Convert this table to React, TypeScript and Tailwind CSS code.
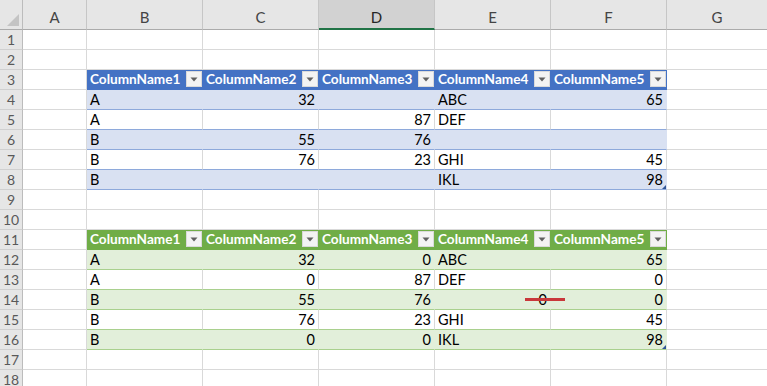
import React from "react";

type Kind =
  | "plain"
  | "bHead"
  | "bBand"
  | "bWhite"
  | "gHead"
  | "gBand"
  | "gWhite";

type CellDef = { v?: string; num?: boolean; strike?: boolean; handle?: boolean };

const cols = ["A", "B", "C", "D", "E", "F", "G"];

const kindClass: Record<Kind, string> = {
  plain: "bg-white border-r border-b border-[#d9d9d9]",
  bHead: "bg-[#4472c4] border-r border-b border-[#4472c4]",
  bBand: "bg-[#d9e1f2] border-r border-r-[#d9e1f2] border-b border-b-[#8ea9db]",
  bWhite: "bg-white border-r border-r-[#d9d9d9] border-b border-b-[#8ea9db]",
  gHead: "bg-[#70ad47] border-r border-b border-[#70ad47]",
  gBand: "bg-[#e2efda] border-r border-r-[#e2efda] border-b border-b-[#a9d08e]",
  gWhite: "bg-white border-r border-r-[#d9d9d9] border-b border-b-[#a9d08e]",
};

const blueData: CellDef[][] = [
  [{ v: "A" }, { v: "32", num: true }, {}, { v: "ABC" }, { v: "65", num: true }],
  [{ v: "A" }, {}, { v: "87", num: true }, { v: "DEF" }, {}],
  [{ v: "B" }, { v: "55", num: true }, { v: "76", num: true }, {}, {}],
  [{ v: "B" }, { v: "76", num: true }, { v: "23", num: true }, { v: "GHI" }, { v: "45", num: true }],
  [{ v: "B" }, {}, {}, { v: "IKL" }, { v: "98", num: true, handle: true }],
];

const greenData: CellDef[][] = [
  [{ v: "A" }, { v: "32", num: true }, { v: "0", num: true }, { v: "ABC" }, { v: "65", num: true }],
  [{ v: "A" }, { v: "0", num: true }, { v: "87", num: true }, { v: "DEF" }, { v: "0", num: true }],
  [{ v: "B" }, { v: "55", num: true }, { v: "76", num: true }, { v: "0", num: true, strike: true }, { v: "0", num: true }],
  [{ v: "B" }, { v: "76", num: true }, { v: "23", num: true }, { v: "GHI" }, { v: "45", num: true }],
  [{ v: "B" }, { v: "0", num: true }, { v: "0", num: true }, { v: "IKL" }, { v: "98", num: true, handle: true }],
];

function Dropdown() {
  return (
    <span className="flex h-4 w-4 shrink-0 items-center justify-center border border-[#dadada] bg-[#f3f3f3] mt-[1px]">
      <svg width="8" height="5" viewBox="0 0 8 5">
        <polygon points="0.5,0.5 7.5,0.5 4,4.5" fill="#606060" />
      </svg>
    </span>
  );
}

function DataCell({ kind, cell, last }: { kind: Kind; cell: CellDef; last?: boolean }) {
  const extra = last ? " border-r-[#d9d9d9]" : "";
  return (
    <div
      className={
        "relative flex h-5 items-end overflow-visible px-[3px] pb-[1px] text-[14.5px] leading-[17px] text-black " +
        kindClass[kind] +
        extra +
        (cell.num ? " justify-end" : " justify-start")
      }
    >
      {cell.v ? <span>{cell.v}</span> : null}
      {cell.strike ? (
        <span className="pointer-events-none absolute left-[90px] top-[8px] z-10 h-[3px] w-[40px] bg-[#c9383b]" />
      ) : null}
      {cell.handle ? (
        <svg className="absolute bottom-0 right-0" width="4" height="4" viewBox="0 0 4 4">
          <polygon points="4,0 4,4 0,4" fill="#2f5597" />
        </svg>
      ) : null}
    </div>
  );
}

function HeadCell({ kind, label }: { kind: Kind; label: string }) {
  return (
    <div
      className={
        "flex h-5 items-start justify-between pl-[3px] text-[13.6px] font-bold leading-[19px] text-white " +
        kindClass[kind]
      }
    >
      <span className="whitespace-nowrap">{label}</span>
      <Dropdown />
    </div>
  );
}

export default function App() {
  const rows: React.ReactNode[] = [];

  for (let r = 1; r <= 18; r++) {
    const cells: React.ReactNode[] = [];
    cells.push(
      <div
        key={"rh" + r}
        className="flex h-5 items-center justify-center border-r border-b border-r-[#bcbcbc] border-b-[#d0d0d0] bg-[#e6e6e6] text-[14px] leading-none text-[#595959]"
      >
        {r}
      </div>
    );
    cells.push(<div key={"a" + r} className={"h-5 " + kindClass.plain} />);

    const isBlueHead = r === 3;
    const isGreenHead = r === 11;
    const blueIdx = r - 4;
    const greenIdx = r - 12;

    for (let c = 0; c < 5; c++) {
      const key = r + "-" + c;
      if (isBlueHead) {
        cells.push(<HeadCell key={key} kind="bHead" label={"ColumnName" + (c + 1)} />);
      } else if (isGreenHead) {
        cells.push(<HeadCell key={key} kind="gHead" label={"ColumnName" + (c + 1)} />);
      } else if (blueIdx >= 0 && blueIdx < 5) {
        const kind: Kind = blueIdx % 2 === 0 ? "bBand" : "bWhite";
        cells.push(<DataCell key={key} kind={kind} cell={blueData[blueIdx][c]} last={c === 4} />);
      } else if (greenIdx >= 0 && greenIdx < 5) {
        const kind: Kind = greenIdx % 2 === 0 ? "gBand" : "gWhite";
        cells.push(<DataCell key={key} kind={kind} cell={greenData[greenIdx][c]} last={c === 4} />);
      } else {
        cells.push(<div key={key} className={"h-5 " + kindClass.plain} />);
      }
    }
    cells.push(<div key={"g" + r} className="h-5 border-b border-[#d9d9d9] bg-white" />);
    rows.push(...cells);
  }

  return (
    <div
      className="h-[386px] w-[767px] overflow-hidden bg-white"
      style={{ fontFamily: "Lato, 'Open Sans', 'Liberation Sans', sans-serif" }}
    >
      <div className="grid grid-cols-[23px_64px_116px_116px_116px_116px_116px_1fr]">
        <div className="relative h-[30px] border-r border-b border-r-[#bcbcbc] border-b-[#ababab] bg-[#e6e6e6]">
          <svg className="absolute bottom-[3px] right-[3px]" width="12" height="12" viewBox="0 0 12 12">
            <polygon points="12,0 12,12 0,12" fill="#c4c4c4" />
          </svg>
        </div>
        {cols.map((c) =>
          c === "D" ? (
            <div
              key={c}
              className="flex h-[30px] items-end justify-center border-r border-r-[#c6c6c6] border-b-2 border-b-[#217346] bg-[#d2d2d2] pb-[3px] text-[15px] leading-none text-[#262626]"
            >
              {c}
            </div>
          ) : (
            <div
              key={c}
              className={
                "flex h-[30px] items-end justify-center border-b border-b-[#ababab] bg-[#e6e6e6] pb-[4px] text-[15px] leading-none text-[#444444]" +
                (c === "G" ? "" : " border-r border-r-[#c6c6c6]")
              }
            >
              {c}
            </div>
          )
        )}
        {rows}
      </div>
    </div>
  );
}
